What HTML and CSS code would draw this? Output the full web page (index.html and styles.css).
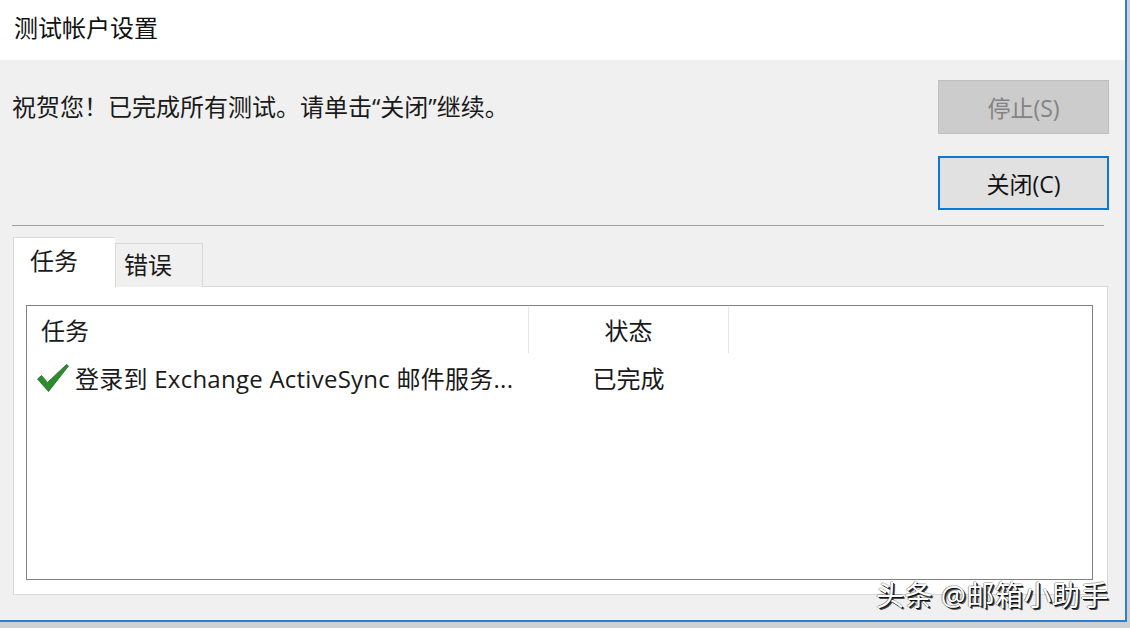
FILE: index.html
```html
<!DOCTYPE html>
<html lang="zh-CN">
<head>
	<meta charset="UTF-8">
	<meta name="viewport" content="width=device-width, initial-scale=1.0">
	<title>测试帐户设置</title>
	<link rel="stylesheet" href="styles.css">
</head>
<body>
	<div class="window">
		<div class="titlebar">测试帐户设置</div>
		<div class="content">
			<div class="top">
				<div class="message">祝贺您！已完成所有测试。请单击“关闭”继续。</div>
				<div class="buttons">
					<button class="btn btn-disabled" disabled>停止(S)</button>
					<button class="btn btn-default">关闭(C)</button>
				</div>
			</div>
			<div class="separator"></div>
			<div class="tabs">
				<div class="tab active">任务</div>
				<div class="tab">错误</div>
			</div>
			<div class="panel">
				<div class="listbox">
					<div class="list-header">
						<div class="col col-task">任务</div>
						<div class="col col-status">状态</div>
					</div>
					<div class="list-row">
						<div class="col col-task">
							<svg class="check" width="32" height="28" viewBox="0 0 32 28">
								<path d="M0.5 15 L4.5 11.5 L10.5 18.5 L29.5 0.5 L31.5 2 L11.5 27.5 Z" fill="#2d8b30" stroke="#1c6a1f" stroke-width="0.8" stroke-linejoin="round"/>
							</svg>
							<span>登录到 Exchange ActiveSync 邮件服务...</span>
						</div>
						<div class="col col-status">已完成</div>
					</div>
				</div>
			</div>
		</div>
	</div>
	<div class="watermark">头条 @邮箱小助手</div>
</body>
</html>
```

FILE: styles.css
```css
body {
	margin: 0;
	width: 1130px;
	height: 628px;
	overflow: hidden;
	background: #cdd1d4;
	font-family: "Open Sans", "Noto Sans CJK SC", sans-serif;
	color: #1a1a1a;
	position: relative;
}

.window {
	width: 1125px;
	height: 620px;
	background: #f0f0f0;
	border-right: 2px solid #2b7fcf;
	border-bottom: 2px solid #2b7fcf;
}

.titlebar {
	height: 60px;
	background: #fff;
	padding-left: 14px;
	font-size: 24px;
	line-height: 56px;
	color: #111;
}

.content {
	padding: 20px 16px 0 12px;
}

.top {
	display: flex;
	justify-content: space-between;
	align-items: flex-start;
}

.message {
	margin-top: 13px;
	font-size: 24px;
	line-height: 28px;
}

.buttons {
	display: flex;
	flex-direction: column;
	gap: 22px;
}

.btn {
	width: 171px;
	height: 54px;
	box-sizing: border-box;
	font-family: inherit;
	font-size: 23px;
	padding: 0;
}

.btn-disabled {
	background: #cccccc;
	border: 1px solid #bfbfbf;
	color: #838383;
}

.btn-default {
	background: #e1e1e1;
	border: 2px solid #0a78d4;
	color: #111;
}

.separator {
	margin: 15px 5px 0 0;
	height: 1px;
	background: #a0a0a0;
}

.tabs {
	display: flex;
	align-items: flex-end;
	margin: 11px 0 -1px 1px;
	position: relative;
	z-index: 1;
}

.tab {
	box-sizing: border-box;
	width: 88px;
	height: 44px;
	padding-left: 8px;
	font-size: 24px;
	line-height: 42px;
	background: #f0f0f0;
	border: 1px solid #d9d9d9;
	border-bottom: none;
}

.tab.active {
	width: 102px;
	height: 50px;
	padding-left: 16px;
	line-height: 46px;
	background: #fff;
	border-right: none;
}

.panel {
	margin-left: 1px;
	width: 1095px;
	height: 309px;
	box-sizing: border-box;
	background: #fff;
	border: 1px solid #d9d9d9;
	padding: 18px 14px 14px 12px;
}

.listbox {
	height: 100%;
	box-sizing: border-box;
	border: 1px solid #7f8189;
}

.list-header,
.list-row {
	display: flex;
	font-size: 24px;
}

.list-header {
	height: 48px;
	line-height: 48px;
	padding-top: 1px;
}

.list-header .col {
	border-right: 1px solid #e5e5e5;
	height: 46px;
}

.col-task {
	box-sizing: border-box;
	width: 502px;
	padding-left: 14px;
}

.col-status {
	width: 199px;
	text-align: center;
}

.list-row {
	margin-top: 8px;
	height: 32px;
	line-height: 32px;
}

.list-row .col-task {
	display: flex;
	align-items: center;
	padding-left: 10px;
	gap: 6px;
}

.list-row .col-task span {
	white-space: nowrap;
	letter-spacing: 0.25px;
}

.check {
	flex: none;
	margin-top: -2px;
}

.watermark {
	position: absolute;
	left: 876px;
	top: 577px;
	font-size: 28px;
	line-height: 36px;
	color: #fff;
	text-shadow: 1px 1px 0 #111, 2px 2px 0 rgba(0, 0, 0, 0.7), -1px 0 0 rgba(0, 0, 0, 0.35), 0 -1px 0 rgba(0, 0, 0, 0.25);
	letter-spacing: 0.5px;
}
```
